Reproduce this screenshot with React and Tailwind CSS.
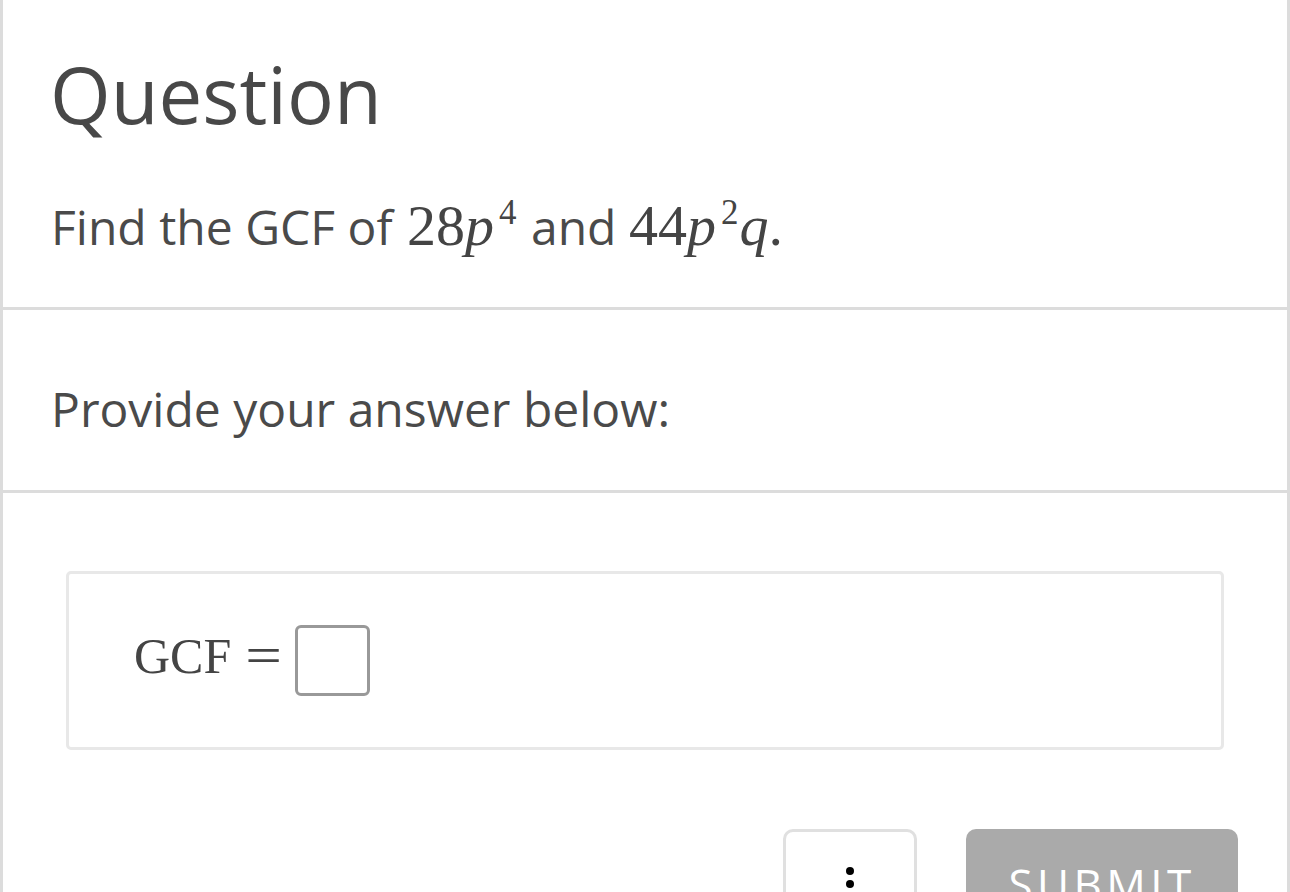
export default function App() {
  const sans = { fontFamily: '"Open Sans", "Noto Sans", sans-serif' };
  return (
    <div className="min-h-screen bg-white">
      <div className="border-x-[3px] border-[#dcdcdc] text-[#4a4a4a] font-['Open_Sans',_'Noto_Sans',_sans-serif]">
        {/* Question section */}
        <div className="pl-[47px] pt-[55px] pb-[44px] border-b-[3px] border-[#dcdcdc]">
          <h1 className="text-[78px] leading-none font-normal text-[#484848]">Question</h1>
          <p className="mt-[57px] text-[48px] leading-[72px] pl-[1px]">
            Find the GCF of{' '}
            <span className="font-['Liberation_Serif',_serif] text-[58px] text-[#444] ml-[2px]">
              28<i>p</i>
              <span className="text-[35px] leading-none [vertical-align:21px] ml-[5px]">4</span>
            </span>{' '}
            <span className="ml-[2px]">and</span>{' '}
            <span className="font-['Liberation_Serif',_serif] text-[58px] text-[#444]">
              44<i>p</i>
              <span className="text-[35px] leading-none [vertical-align:21px] ml-[5px]">2</span>
              <i className="ml-[1px]">q</i>.
            </span>
          </p>
        </div>

        {/* Provide section */}
        <div className="pl-[48px] pt-[66px] pb-[49px] border-b-[3px] border-[#dcdcdc]">
          <p className="text-[48px] leading-[65px]">Provide your answer below:</p>
        </div>

        {/* Answer section */}
        <div className="pt-[78px] px-[63px]">
          <div className="h-[179px] border-[3px] border-[#e8e8e8] rounded-[5px] flex items-center pl-[65px]">
            <div className="flex items-center">
              <span className="font-['Liberation_Serif',_serif] text-[50px] leading-none text-[#444] mb-[10px]">
                GCF
              </span>
              <span className="inline-block scale-x-125 font-['Liberation_Serif',_serif] text-[52px] leading-none text-[#444] mb-[10px] ml-[18px] mr-[16px]">
                =
              </span>
              <div className="w-[75px] h-[71px] border-[3px] border-[#999] rounded-[6px] bg-white"></div>
            </div>
          </div>
        </div>

        <div className="flex justify-end gap-[49px] pr-[49px] pt-[79px]">
          <button className="w-[134px] h-[110px] border-[3px] border-[#e0e0e0] rounded-[10px] bg-white flex flex-col items-center justify-center gap-[5px]">
            <span className="block w-[8px] h-[8px] rounded-full bg-black"></span>
            <span className="block w-[8px] h-[8px] rounded-full bg-black"></span>
            <span className="block w-[8px] h-[8px] rounded-full bg-black"></span>
          </button>
          <button
            style={sans}
            className="w-[272px] h-[110px] rounded-[10px] bg-[#aaaaaa] text-white text-[44px] leading-none tracking-[0.1em] flex items-center justify-center"
          >
            SUBMIT
          </button>
        </div>
      </div>
    </div>
  );
}
